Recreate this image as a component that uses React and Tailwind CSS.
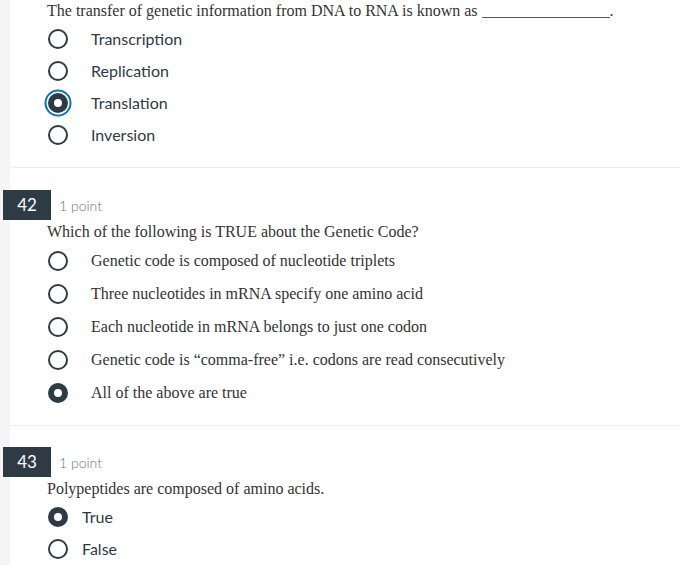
import React from 'react';

const serif = { fontFamily: '"Liberation Serif", "Times New Roman", serif' };

const Radio = ({ checked, focused }) => (
  <span
    className={
      'flex h-5 w-5 shrink-0 items-center justify-center rounded-full border-2 border-[#2d3b45] ' +
      (checked ? 'bg-[#2d3b45] ' : 'bg-white ') +
      (focused ? 'ring-2 ring-[#0374b5] ring-offset-[1.5px] ring-offset-white' : '')
    }
  >
    {checked && <span className="h-2 w-2 rounded-full bg-white"></span>}
  </span>
);

const Option = ({ label, checked, focused, isSerif, h = 'h-8', gap = 'ml-[23px]' }) => (
  <div className={`flex items-center pl-[38px] ${h}`}>
    <Radio checked={checked} focused={focused} />
    <span
      className={`${gap} text-[16px] ${isSerif ? 'text-[#333]' : 'text-[#2d3b45]'}`}
      style={isSerif ? serif : undefined}
    >
      {label}
    </span>
  </div>
);

const Header = ({ num }) => (
  <div className="flex items-center">
    <div className="-ml-[7px] flex h-[30px] w-[48px] items-center justify-center bg-[#2d3b45] text-[17px] text-white">
      {num}
    </div>
    <span className="ml-[8px] text-[14px] font-light text-[#6b7780]">1 point</span>
  </div>
);

export default function App() {
  return (
    <div className="flex h-[565px] w-[680px] overflow-hidden bg-white" style={{ fontFamily: 'Lato, "Noto Sans", sans-serif' }}>
      {/* left gutter */}
      <div className="w-[10px] shrink-0 bg-[#f5f5f5]"></div>

      <div className="flex-1">
        {/* question 41 (scrolled) */}
        <div className="pb-4">
          <p className="h-[22px] pl-[37px] text-[16px] leading-[22px] text-[#333]" style={serif}>
            The transfer of genetic information from DNA to RNA is known as{' '}
            <span className="inline-block w-[128px] translate-y-[2px] border-b border-[#555] align-baseline"></span>.
          </p>
          <div className="mt-px">
            <Option label="Transcription" />
            <Option label="Replication" />
            <Option label="Translation" checked focused />
            <Option label="Inversion" />
          </div>
        </div>
        <div className="h-px bg-[#eeeeee]"></div>

        {/* question 42 */}
        <div className="pt-[22px] pb-4">
          <Header num="42" />
          <p className="h-6 pl-[37px] text-[16px] leading-6 text-[#333]" style={serif}>
            Which of the following is TRUE about the Genetic Code?
          </p>
          <Option isSerif h="h-[33px]" label="Genetic code is composed of nucleotide triplets" />
          <Option isSerif h="h-[33px]" label="Three nucleotides in mRNA specify one amino acid" />
          <Option isSerif h="h-[33px]" label="Each nucleotide in mRNA belongs to just one codon" />
          <Option isSerif h="h-[33px]" label="Genetic code is “comma-free” i.e. codons are read consecutively" />
          <Option isSerif h="h-[33px]" label="All of the above are true" checked />
        </div>
        <div className="h-px bg-[#eeeeee]"></div>

        {/* question 43 */}
        <div className="pt-[21px]">
          <Header num="43" />
          <p className="h-6 pl-[37px] text-[16px] leading-6 text-[#333]" style={serif}>
            Polypeptides are composed of amino acids.
          </p>
          <Option label="True" checked gap="ml-[14px]" />
          <Option label="False" gap="ml-[14px]" />
        </div>
      </div>
    </div>
  );
}
